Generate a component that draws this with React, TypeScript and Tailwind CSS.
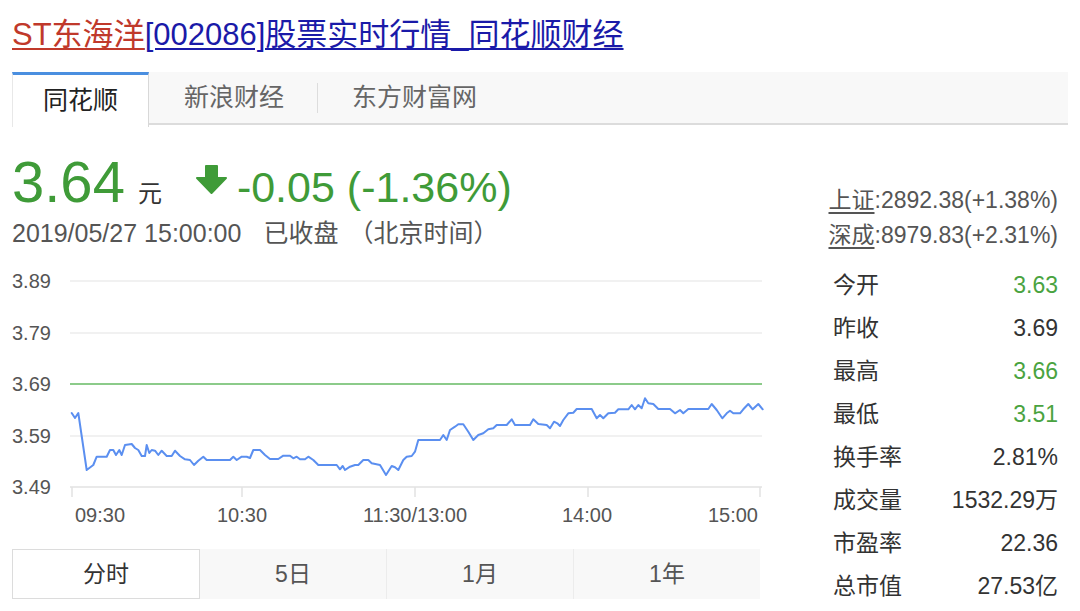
import React from "react";

const FONT = '"Liberation Sans", "Noto Sans CJK SC", sans-serif';

const pts =
  "71.7,413 75,418 78.3,413 86.7,470 93.3,465 96.7,456.7 106.7,456.7 110,450 113.3,450 116,455 119.3,450 121.7,455 125,445 131.7,444 135,448 138.3,450 141.7,456 145,456 146.7,445 149.3,453 151.7,450 155,450.7 158.3,455 161.7,450.7 166.7,456 171.7,456 175,450.7 180,456 185,459.3 190,460 194,465 198.3,460.7 203.3,456.7 206.7,460 230,460 233.3,456.7 236.7,460 241.7,456.7 246.7,456.7 250,458 253.3,450 260,450 265,455 270,459 278.3,459 283.3,455.7 290,455.7 293.3,458.3 296.7,456.7 300,459.3 305,459.3 308.3,456.7 313.3,460 318.3,465 336.7,465 340,469.3 342.7,466 345,470 350,466.7 355,465 358.3,465 363.3,460 368.3,460 371.7,463.3 380,465 386,475 391.7,466 395,467.3 398.3,470 403.3,460 406.7,456.7 411.7,456 415,451.7 418.3,440 440,440 443.3,435 446.7,440 450,430 455,426.7 458.3,424.3 463.3,424.3 468.3,431.7 473.3,440 478.3,435 483.3,433.3 488.3,429.3 493.3,428.3 496.7,425 506.7,425 511.7,419.3 515,425 530,425 533.3,419.3 538.3,424 546.7,425 550,428.3 554,421.7 557.3,423.3 560,426 563.3,420 568.3,413.3 573.3,412.7 576.7,409 591.7,409 596.7,418.3 600,415 603.3,418.3 608.3,413.3 615,412.7 618.3,409.3 628.3,409.3 631.7,405 635,409.3 638.3,405 641.7,408.3 645,398.3 648.3,403.3 653.3,404 658.3,409 670,409 675,413.3 680,410 683.3,413.3 688.3,409 708.3,409 711.7,404 716.7,410 722.3,418.3 726.7,413.3 730,410.7 733.3,413.3 740,413.3 743.3,409.3 748.3,404 752.7,409.3 758.3,404 762.7,409.3";

const stats: { label: string; value: string; green?: boolean }[] = [
  { label: "今开", value: "3.63", green: true },
  { label: "昨收", value: "3.69" },
  { label: "最高", value: "3.66", green: true },
  { label: "最低", value: "3.51", green: true },
  { label: "换手率", value: "2.81%" },
  { label: "成交量", value: "1532.29万" },
  { label: "市盈率", value: "22.36" },
  { label: "总市值", value: "27.53亿" },
];

function Chart() {
  const yLabels = [
    { t: "3.89", y: 281 },
    { t: "3.79", y: 333 },
    { t: "3.69", y: 384 },
    { t: "3.59", y: 436 },
    { t: "3.49", y: 487 },
  ];
  const ticks = [72, 242, 415, 588, 760];
  return (
    <svg
      width={770}
      height={293}
      viewBox="0 248 770 293"
      className="block"
      style={{ fontFamily: FONT }}
    >
      {[281, 333, 436].map((y) => (
        <line key={y} x1={70} x2={762} y1={y} y2={y} stroke="#ececec" strokeWidth={1.5} />
      ))}
      <line x1={70} x2={762} y1={384} y2={384} stroke="#8ccb8a" strokeWidth={1.8} />
      <line x1={70} x2={762} y1={487} y2={487} stroke="#e2e2e2" strokeWidth={1.5} />
      {ticks.map((x) => (
        <line key={x} x1={x} x2={x} y1={487} y2={497} stroke="#e2e2e2" strokeWidth={1.5} />
      ))}
      {yLabels.map((l) => (
        <text key={l.t} x={12} y={l.y + 7} fontSize={20} fill="#555">
          {l.t}
        </text>
      ))}
      <text x={75} y={522} fontSize={20} fill="#555">09:30</text>
      <text x={242} y={522} fontSize={20} fill="#555" textAnchor="middle">10:30</text>
      <text x={415} y={522} fontSize={20} fill="#555" textAnchor="middle">11:30/13:00</text>
      <text x={587} y={522} fontSize={20} fill="#555" textAnchor="middle">14:00</text>
      <text x={758} y={522} fontSize={20} fill="#555" textAnchor="end">15:00</text>
      <polyline
        points={pts}
        fill="none"
        stroke="#5b8ff0"
        strokeWidth={2}
        strokeLinejoin="round"
        strokeLinecap="round"
      />
    </svg>
  );
}

export default function App() {
  return (
    <div
      className="w-[1080px] h-[611px] overflow-hidden bg-white text-[#333]"
      style={{ fontFamily: FONT }}
    >
      {/* Title */}
      <div className="h-[72px] pl-[12px] pt-[16px]">
        <div className="text-[31px] leading-[38px] whitespace-nowrap">
          <a className="text-[#c0392b] underline decoration-[2px] underline-offset-[3px]">ST东海洋</a>
          <a className="text-[#1a1aa8] underline decoration-[2px] underline-offset-[3px]">
            [002086]股票实时行情_同花顺财经
          </a>
        </div>
      </div>

      {/* Source tabs */}
      <div className="mx-[12px] h-[53px] bg-[#f8f8f8] border-b-2 border-[#dcdcdc] flex items-stretch">
        <div className="w-[137px] h-[55px] -mb-[2px] bg-white border-t-[3px] border-t-[#4a8fe0] border-l border-l-[#e8e8e8] border-r border-r-[#d8d8d8] flex items-center justify-center text-[25px] text-[#222]">
          同花顺
        </div>
        <div className="flex items-center text-[25px] text-[#666]">
          <span className="pl-[35px] pr-[33px]">新浪财经</span>
          <span className="w-px h-[30px] bg-[#dddddd]" />
          <span className="pl-[34px]">东方财富网</span>
        </div>
      </div>

      <div className="flex">
        {/* Left */}
        <div className="w-[770px]">
          <div className="mt-[28px] h-[58px] pl-[12px] flex items-baseline whitespace-nowrap text-[#3f9b38]">
            <span className="text-[58px] leading-[58px]">3.64</span>
            <span className="ml-[13px] text-[24px] text-[#333]">元</span>
            <svg width="33" height="30" viewBox="0 0 33 30" className="ml-[33px] self-center -mt-[4px]">
              <path
                d="M11 1 H22 V13 H31 L16.5 28 L2 13 H11 Z"
                fill="#3f9b38"
                stroke="#3f9b38"
                strokeWidth={2}
                strokeLinejoin="round"
              />
            </svg>
            <span className="ml-[9px] text-[43px] leading-[58px]">-0.05 (-1.36%)</span>
          </div>
          <div className="mt-[7px] h-[30px] pl-[12px] text-[25px] leading-[30px] text-[#555] whitespace-nowrap">
            2019/05/27 15:00:00<span className="ml-[22px]">已收盘</span>
            <span className="ml-[10px]">（北京时间）</span>
          </div>
          <Chart />
          <div className="mt-[8px] ml-[12px] w-[748px] h-[50px] flex bg-[#f8f8f8] text-[23px]">
            <div className="flex-1 bg-white border border-[#dcdcdc] flex items-center justify-center text-[#333]">
              分时
            </div>
            <div className="flex-1 border-r border-[#ececec] flex items-center justify-center text-[#555]">
              5日
            </div>
            <div className="flex-1 border-r border-[#ececec] flex items-center justify-center text-[#555]">
              1月
            </div>
            <div className="flex-1 flex items-center justify-center text-[#555]">1年</div>
          </div>
        </div>

        {/* Right */}
        <div className="flex-1 pr-[22px] pt-[58px]">
          <div className="text-right text-[23px] leading-[35px] text-[#555] whitespace-nowrap">
            <div>
              <span className="underline underline-offset-[4px]">上证</span>:2892.38(+1.38%)
            </div>
            <div>
              <span className="underline underline-offset-[4px]">深成</span>:8979.83(+2.31%)
            </div>
          </div>
          <div className="mt-[11px] pl-[63px]">
            {stats.map((s) => (
              <div key={s.label} className="h-[43px] flex items-center justify-between text-[23px]">
                <span className="text-[#333]">{s.label}</span>
                <span className={s.green ? "text-[#4aa340]" : "text-[#333]"}>{s.value}</span>
              </div>
            ))}
          </div>
        </div>
      </div>
    </div>
  );
}
